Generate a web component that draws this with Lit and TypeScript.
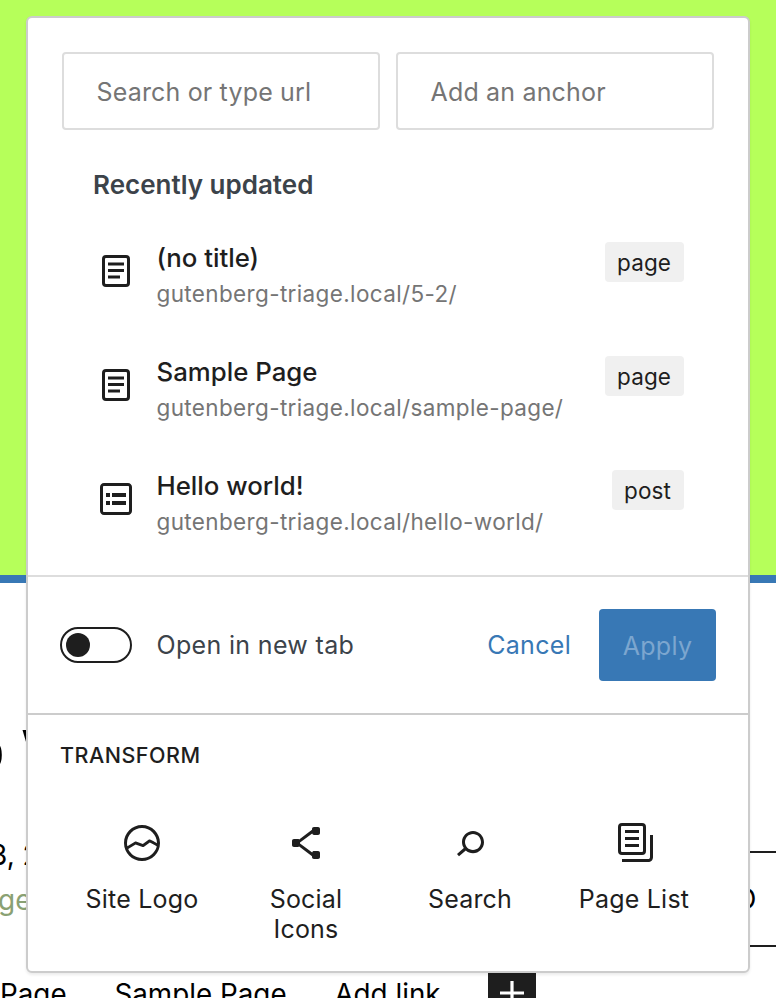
import { LitElement, html, css, svg } from "lit";
import { customElement } from "lit/decorators.js";

const icon = (paths: string[], cls = "") => html`<svg class="icon ${cls}" viewBox="0 0 24 24" width="48" height="48" aria-hidden="true">${paths.map((d) => svg`<path d=${d}></path>`)}</svg>`;

const PAGE = ["M7 5.5h10a.5.5 0 01.5.5v12a.5.5 0 01-.5.5H7a.5.5 0 01-.5-.5V6a.5.5 0 01.5-.5zM17 4H7a2 2 0 00-2 2v12a2 2 0 002 2h10a2 2 0 002-2V6a2 2 0 00-2-2zm-1 3.75H8v1.5h8v-1.5zM8 11h8v1.5H8V11zm6 3.25H8v1.5h6v-1.5z"];
const POST = ["M6 4h12c1.1 0 2 .9 2 2v12c0 1.1-.9 2-2 2H6c-1.1 0-2-.9-2-2V6c0-1.1.9-2 2-2zm12 1.5H6c-.3 0-.5.2-.5.5v12c0 .3.2.5.5.5h12c.3 0 .5-.2.5-.5V6c0-.3-.2-.5-.5-.5zM7 9h2v2H7V9zm3 0h7v2h-7V9zm-3 4h2v2H7v-2zm3 0h7v2h-7v-2z"];
const LOGO = ["M12 3c-5 0-9 4-9 9s4 9 9 9 9-4 9-9-4-9-9-9zm0 1.5c4.1 0 7.5 3.4 7.5 7.5v.1c-1.4-.8-3.3-1.7-3.4-1.8-.2-.1-.5-.1-.8.1l-2.9 2.1L9 11.3c-.2-.1-.4 0-.6.1l-3.7 2.2c-.1-.5-.2-1-.2-1.5 0-4.2 3.4-7.6 7.5-7.6zm0 15c-3.1 0-5.7-1.9-6.9-4.5l3.7-2.2 3.5 1.2c.2.1.5 0 .7-.1l2.9-2.1c.8.4 2.5 1.2 3.5 1.9-.9 3.3-3.9 5.8-7.4 5.8z"];
const SHARE = ["M9 11.8l6.1-4.5c.1.4.4.7.9.7h2c.6 0 1-.4 1-1V5c0-.6-.4-1-1-1h-2c-.6 0-1 .4-1 1v.4l-6.4 4.8c-.2-.1-.4-.2-.6-.2H6c-.6 0-1 .4-1 1v2c0 .6.4 1 1 1h2c.2 0 .4-.1.6-.2l6.4 4.8v.4c0 .6.4 1 1 1h2c.6 0 1-.4 1-1v-2c0-.6-.4-1-1-1h-2c-.5 0-.8.3-.9.7L9 12.2v-.4z"];
const SEARCH = ["M13.5 6C10.5 6 8 8.5 8 11.5c0 1.1.3 2.1.9 3l-3.4 3 1 1.1 3.4-2.9c1 .9 2.2 1.4 3.6 1.4 3 0 5.5-2.5 5.5-5.5C19 8.5 16.5 6 13.5 6zm0 9.5c-2.2 0-4-1.8-4-4s1.8-4 4-4 4 1.8 4 4-1.8 4-4 4z"];
const PAGES = [
  "M14.5 5.5h-7V7h7V5.5ZM7.5 9h7v1.5h-7V9Zm7 3.5h-7V14h7v-1.5Z",
  "M16 2H6a2 2 0 0 0-2 2v12a2 2 0 0 0 2 2h10a2 2 0 0 0 2-2V4a2 2 0 0 0-2-2ZM6 3.5h10a.5.5 0 0 1 .5.5v12a.5.5 0 0 1-.5.5H6a.5.5 0 0 1-.5-.5V4a.5.5 0 0 1 .5-.5Z",
  "M20 8v11c0 .69-.31 1-.999 1H6v1.5h13.001c1.52 0 2.499-.982 2.499-2.5V8H20Z",
];

const RESULTS = [
  { icon: PAGE, title: "(no title)", url: "gutenberg-triage.local/5-2/", tag: "page" },
  { icon: PAGE, title: "Sample Page", url: "gutenberg-triage.local/sample-page/", tag: "page" },
  { icon: POST, title: "Hello world!", url: "gutenberg-triage.local/hello-world/", tag: "post" },
];
const BLOCKS = [
  { icon: LOGO, label: "Site Logo" },
  { icon: SHARE, label: "Social Icons" },
  { icon: SEARCH, label: "Search" },
  { icon: PAGES, label: "Page List" },
];

@customElement("app-root")
export class AppRoot extends LitElement {
  static styles = css`
    :host { display: block; position: relative; width: 776px; height: 998px; overflow: hidden; background: #fff; font-family: Inter, "Liberation Sans", sans-serif; color: #1e1e1e; }
    .hero { height: 575px; background: #b6ff5a; }
    .rule { height: 8px; background: #3878b5; }
    .heading { height: 268px; box-sizing: border-box; padding-top: 132px; font-size: 58px; line-height: 70px; white-space: nowrap; margin-left: -41px; word-spacing: 2px; color: #000; font-family: "Liberation Sans", sans-serif; }
    .meta { display: flex; justify-content: space-between; height: 96px; }
    .meta-left { font-size: 28px; line-height: 34px; margin-left: -10px; margin-top: -13px; white-space: nowrap; color: #000; }
    .meta-left div:last-child { margin-top: 11px; color: #8aa173; margin-left: 8px; }
    .meta-right { width: 60px; box-sizing: border-box; border-top: 2px solid #1e1e1e; border-bottom: 2px solid #1e1e1e; font-size: 28px; line-height: 92px; white-space: nowrap; padding-left: 19px; color: #000; }
    .nav { display: flex; align-items: flex-start; font-size: 27.8px; line-height: 34px; color: #000; white-space: nowrap; }
    .nav span { margin-right: 47.8px; margin-top: 30px; }
    .add { width: 48px; height: 48px; background: #1e1e1e; margin-top: 26px; flex: none; display: flex; align-items: flex-start; justify-content: center; }
    .add svg { fill: #fff; margin-top: -4px; }

    .popup { position: absolute; left: 26px; top: 16px; width: 724px; height: 957px; box-sizing: border-box; background: #fff; border: 2px solid #ccc; border-radius: 6px; display: flex; flex-direction: column; box-shadow: 0 2px 3px rgba(0,0,0,.08); }
    .icon { fill: #1e1e1e; display: block; flex: none; }
    .fields { display: flex; gap: 16px; padding: 34px 34px 0; }
    .field { width: 318px; height: 78px; box-sizing: border-box; border: 2px solid #ddd; border-radius: 4px; font-size: 25px; letter-spacing: .17px; line-height: 76px; padding-left: 32.5px; color: #757575; }
    h2 { margin: 39px 0 0 65px; font-size: 26px; line-height: 32px; font-weight: 600; color: #3c434a; }
    .results { display: flex; flex-direction: column; gap: 26px; margin: 41px 0 0; padding: 0 64px 0 64px; }
    .result { display: flex; height: 88px; }
    .result .icon { margin-top: 5px; }
    .result .text { flex: 1; margin-left: 16.5px; min-width: 0; }
    .title { font-size: 25.8px; line-height: 32px; font-weight: 500; color: #1e1e1e; }
    .url { font-size: 22.5px; letter-spacing: .36px; line-height: 32px; margin-top: 4px; color: #757575; }
    .tag { align-self: flex-start; background: #f0f0f0; border-radius: 4px; height: 40px; line-height: 41px; padding: 0 13px 0 12.5px; font-size: 22.5px; letter-spacing: .1px; margin-left: 8px; color: #1e1e1e; }
    .actions { margin-top: 17px; border-top: 2px solid #ddd; border-bottom: 2px solid #ccc; height: 140px; box-sizing: border-box; display: flex; align-items: center; padding: 0 32px; }
    .toggle { width: 72px; height: 36px; box-sizing: border-box; border: 2px solid #1e1e1e; border-radius: 18px; display: flex; align-items: center; padding-left: 4px; }
    .knob { width: 24px; height: 24px; border-radius: 50%; background: #1e1e1e; }
    .tab-label { font-size: 25px; letter-spacing: .33px; line-height: 34px; color: #3c434a; margin-left: 24.5px; flex: 1; }
    .cancel { font-size: 25px; letter-spacing: .3px; line-height: 34px; color: #3878b5; margin-right: 28px; }
    .apply { width: 117px; height: 72px; background: #3878b5; border-radius: 4px; color: #7ca6cf; font-size: 25px; letter-spacing: .3px; line-height: 74px; text-align: center; }
    .transform { padding: 0 32px; flex: 1; }
    .transform h3 { margin: 26px 0 0 0; font-size: 21.5px; line-height: 28px; font-weight: 500; letter-spacing: .5px; text-transform: uppercase; color: #1e1e1e; }
    .blocks { display: grid; grid-template-columns: repeat(4, 164px); margin-top: 50px; }
    .block { display: flex; flex-direction: column; align-items: center; text-align: center; }
    .block span { margin-top: 17px; font-size: 25px; letter-spacing: .2px; line-height: 30px; width: 120px; }
  `;

  render() {
    return html`
      <div class="hero"></div>
      <div class="rule"></div>
      <div class="heading">lo World</div>
      <div class="meta">
        <div class="meta-left"><div>3, 2021</div><div>ge</div></div>
        <div class="meta-right">O</div>
      </div>
      <div class="nav">
        <span>Page</span><span>Sample Page</span><span>Add link</span>
        <div class="add"><svg viewBox="0 0 24 24" width="48" height="48"><path d="M18 11.2h-5.2V6h-1.6v5.2H6v1.6h5.2V18h1.6v-5.2H18z"></path></svg></div>
      </div>

      <div class="popup">
        <div class="fields">
          <div class="field">Search or type url</div>
          <div class="field">Add an anchor</div>
        </div>
        <h2>Recently updated</h2>
        <div class="results">
          ${RESULTS.map((r) => html`
            <div class="result">
              ${icon(r.icon)}
              <div class="text">
                <div class="title">${r.title}</div>
                <div class="url">${r.url}</div>
              </div>
              <div class="tag">${r.tag}</div>
            </div>`)}
        </div>
        <div class="actions">
          <div class="toggle"><div class="knob"></div></div>
          <div class="tab-label">Open in new tab</div>
          <div class="cancel">Cancel</div>
          <div class="apply">Apply</div>
        </div>
        <div class="transform">
          <h3>Transform</h3>
          <div class="blocks">
            ${BLOCKS.map((b) => html`<div class="block">${icon(b.icon)}<span>${b.label}</span></div>`)}
          </div>
        </div>
      </div>
    `;
  }
}
